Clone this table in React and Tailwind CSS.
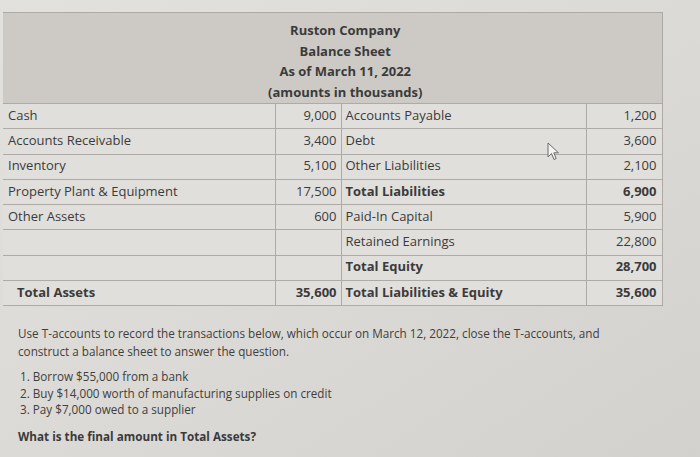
const assets = [
  ["Cash", "9,000"],
  ["Accounts Receivable", "3,400"],
  ["Inventory", "5,100"],
  ["Property Plant & Equipment", "17,500"],
  ["Other Assets", "600"],
  ["", ""],
  ["", ""],
  ["Total Assets", "35,600", true],
];

const claims = [
  ["Accounts Payable", "1,200"],
  ["Debt", "3,600"],
  ["Other Liabilities", "2,100"],
  ["Total Liabilities", "6,900", true],
  ["Paid-In Capital", "5,900"],
  ["Retained Earnings", "22,800"],
  ["Total Equity", "28,700", true],
  ["Total Liabilities & Equity", "35,600", true],
];

const Cursor = () => (
  <svg className="absolute left-[547px] top-[142px]" width="14" height="20" viewBox="0 0 14 20">
    <path d="M1 1 L1 15 L4.5 11.5 L7 17.5 L9.2 16.5 L6.8 10.8 L11.5 10.8 Z" fill="#f4f3f1" stroke="#6b6a68" strokeWidth="1" strokeLinejoin="round" />
  </svg>
);

const App = () => {
  return (
    <div className="relative w-[700px] h-[457px] overflow-hidden bg-gradient-to-br from-[#e3e1de] via-[#dcdad6] to-[#d3d1cd] text-[#3b3b3b] font-['Open_Sans',sans-serif] pt-[12px]">
      <table className="ml-[3px] border-collapse text-[13px] leading-none">
        <thead>
          <tr>
            <th colSpan={4} className="h-[91px] bg-[#cdcac6] border border-[#aeaba7] border-l-0 font-bold text-[13px] leading-[20.5px] pl-[26px] pt-[7px] align-top">
              <div>Ruston Company</div>
              <div>Balance Sheet</div>
              <div>As of March 11, 2022</div>
              <div>(amounts in thousands)</div>
            </th>
          </tr>
        </thead>
        <tbody>
          {assets.map((a, i) => {
            const c = claims[i];
            return (
              <tr key={i} className="h-[25.3px] bg-[#e1dfdb]">
                <td className={`w-[272px] border border-[#aeaba7] border-l-0 pl-[5px] pb-[2px] ${a[2] ? "font-bold pl-[14px]" : ""}`}>{a[0]}</td>
                <td className={`w-[66px] border border-[#aeaba7] text-right pr-[4px] pb-[2px] ${a[2] ? "font-bold" : ""}`}>{a[1]}</td>
                <td className={`w-[245px] border border-[#aeaba7] pl-[4px] pb-[2px] ${c[2] ? "font-bold" : ""}`}>{c[0]}</td>
                <td className={`w-[76px] border border-[#aeaba7] text-right pr-[5px] pb-[2px] ${c[2] ? "font-bold" : ""}`}>{c[1]}</td>
              </tr>
            );
          })}
        </tbody>
      </table>

      <div className="pl-[18px] pt-[18px] text-[11.7px] leading-[18px] text-[#404040]">
        <p>
          Use T-accounts to record the transactions below, which occur on March 12, 2022, close the T-accounts, and
          <br />
          construct a balance sheet to answer the question.
        </p>
        <ol className="mt-[8px] pl-[2px] leading-[16.5px]">
          <li>1. Borrow $55,000 from a bank</li>
          <li>2. Buy $14,000 worth of manufacturing supplies on credit</li>
          <li>3. Pay $7,000 owed to a supplier</li>
        </ol>
        <p className="mt-[9px] font-bold text-[#3a3a3a]">What is the final amount in Total Assets?</p>
        <p className="mt-[10px] pl-[8px] text-[#555]">Note: The numbers in your answer should be in dollars, but the balance sheet units are thousands of dollars.</p>
      </div>

      <Cursor />
    </div>
  );
};

export default App;
